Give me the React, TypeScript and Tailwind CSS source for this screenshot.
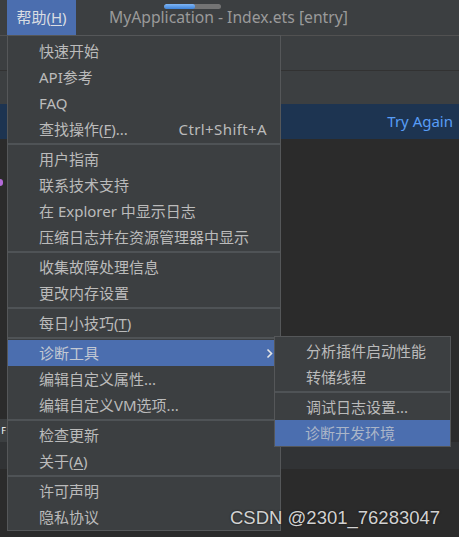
import React from "react";

type ItemProps = {
  children: React.ReactNode;
  shortcut?: string;
  active?: boolean;
  arrow?: boolean;
};

function Item({ children, shortcut, active, arrow }: ItemProps) {
  return (
    <div
      className={
        active
          ? "flex h-[26px] items-center bg-[#4b6eaf] pl-[31px] pr-[7px] text-[#c3c9d3]"
          : "flex h-[26px] items-center pl-[31px] pr-[13px] text-[#bbbbbb]"
      }
    >
      <span className="whitespace-nowrap">{children}</span>
      {shortcut && <span className="ml-auto whitespace-nowrap tracking-[0.4px]">{shortcut}</span>}
      {arrow && (
        <svg className="ml-auto" width="7" height="11" viewBox="0 0 7 11">
          <path d="M1.5 1.5 L5.5 5.5 L1.5 9.5" fill="none" stroke="#e6e6e6" strokeWidth="1.6" />
        </svg>
      )}
    </div>
  );
}

function Sep() {
  return (
    <div className="py-px">
      <div className="h-[2px] bg-[#4f5356]" />
    </div>
  );
}

export default function App() {
  return (
    <div className="relative h-[537px] w-[459px] overflow-hidden bg-[#2b2b2b] font-['Noto_Sans','Noto_Sans_CJK_SC',sans-serif] text-[15px]">
      {/* title bar */}
      <div className="relative flex h-[35px] items-center bg-[#3c3f41]">
        <div className="ml-[7px] flex h-full w-[69px] items-center justify-center bg-[#4b6eaf] text-[#dadde2]">
          <span>
            帮助(<span className="underline underline-offset-2">H</span>)
          </span>
        </div>
        <div className="ml-[33px] whitespace-nowrap text-[15.7px] text-[#9a9a9a]">MyApplication - Index.ets [entry]</div>
        <div className="absolute left-[164px] top-[4px] h-[5px] w-[57px] overflow-hidden rounded-full bg-[#747474]">
          <div className="h-full w-[31px] rounded-full bg-gradient-to-b from-[#7fb6f5] to-[#3d82d8]" />
        </div>
      </div>
      <div className="h-px bg-[#515151]" />
      {/* toolbar rows */}
      <div className="h-[35px] border-b border-[#323232] bg-[#3c3f41]" />
      <div className="h-[33px] bg-[#3c3f41]" />
      {/* notification bar */}
      <div className="flex h-[35px] items-center justify-end bg-[#1d3451] pr-[6px] text-[#589df6]">Try Again</div>
      {/* editor */}
      <div className="relative h-[280px]">
        <div className="absolute left-0 top-[40px] h-[7px] w-[3px] rounded-r bg-[#b36ad8]" />
      </div>
      <div className="flex h-[23px]">
        <div className="flex w-[7px] items-center justify-center overflow-hidden bg-[#3c3f41] text-[9px] leading-none text-white">
          <span>F</span>
        </div>
      </div>
      <div className="h-[27px] bg-[#313335]" />

      {/* main menu */}
      <div className="absolute left-[7px] top-[35px] w-[274px] border border-[#555759] bg-[#3c3f41] pt-[2px]">
        <Item>快速开始</Item>
        <Item>API参考</Item>
        <Item>FAQ</Item>
        <Item shortcut="Ctrl+Shift+A">
          查找操作(<span className="underline underline-offset-2">F</span>)...
        </Item>
        <Sep />
        <Item>用户指南</Item>
        <Item>联系技术支持</Item>
        <Item>在 Explorer 中显示日志</Item>
        <Item>压缩日志并在资源管理器中显示</Item>
        <Sep />
        <Item>收集故障处理信息</Item>
        <Item>更改内存设置</Item>
        <Sep />
        <Item>
          每日小技巧(<span className="underline underline-offset-2">T</span>)
        </Item>
        <Sep />
        <Item active arrow>
          诊断工具
        </Item>
        <Item>编辑自定义属性...</Item>
        <Item>编辑自定义VM选项...</Item>
        <Sep />
        <Item>检查更新</Item>
        <Item>
          关于(<span className="underline underline-offset-2">A</span>)
        </Item>
        <Sep />
        <Item>许可声明</Item>
        <Item>隐私协议</Item>
      </div>

      {/* submenu */}
      <div className="absolute left-[274px] top-[336px] w-[177px] border border-[#555759] bg-[#3c3f41] pt-px">
        <Item>分析插件启动性能</Item>
        <Item>转储线程</Item>
        <Sep />
        <Item>调试日志设置...</Item>
        <div className="flex h-[26px] items-center bg-[#4b6eaf] pl-[30px] text-[#aab5c8]">诊断开发环境</div>
      </div>

      {/* watermark */}
      <div className="absolute left-[230px] top-[504px] whitespace-nowrap font-['Liberation_Sans',Arial,sans-serif] text-[18.5px] text-[#d2d2d2] [text-shadow:0_0_2px_rgba(0,0,0,0.7)]">
        CSDN @2301_76283047
      </div>
    </div>
  );
}
